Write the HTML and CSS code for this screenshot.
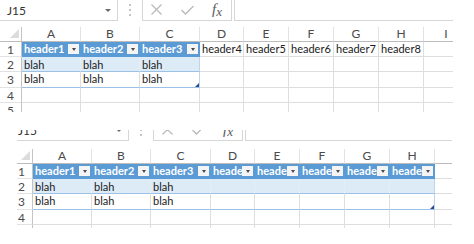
FILE: index.html
```html
<!DOCTYPE html>
<html>
<head>
<meta charset="utf-8">
<link rel="stylesheet" href="styles.css">
</head>
<body>
<div class="page">
  <div class="shot shot-a">
    <div class="sheet">
      <div class="fbar">
        <div class="namebox"><span class="nb-text">J15</span><span class="nb-arrow"></span></div>
        <div class="grip"><svg width="2" height="14" viewBox="0 0 2 14"><rect x="0" y="1" width="2" height="2" fill="#c4c4c4"/><rect x="0" y="6" width="2" height="2" fill="#c4c4c4"/><rect x="0" y="11" width="2" height="2" fill="#c4c4c4"/></svg></div>
        <div class="fbtns">
          <span class="slot s1"><svg width="11" height="11" viewBox="0 0 11 11"><path d="M0.5 0.5 L10.5 10.5 M10.5 0.5 L0.5 10.5" stroke="#b9b9b9" stroke-width="1.2" fill="none"/></svg></span>
          <span class="slot s2"><svg width="13" height="10" viewBox="0 0 13 10"><path d="M0.5 5 L4.5 9 L12.5 1" stroke="#b9b9b9" stroke-width="1.3" fill="none"/></svg></span>
          <span class="slot s3"><span class="fx">f<span class="fx-x">x</span></span></span>
        </div>
        <div class="formula"></div>
      </div>
      <div class="grid">
        <div class="corner"><span class="tri"></span></div>
        <div class="colh">A</div><div class="colh">B</div><div class="colh">C</div><div class="colh">D</div><div class="colh">E</div><div class="colh">F</div><div class="colh">G</div><div class="colh">H</div><div class="colh">I</div>

        <div class="rowh">1</div>
        <div class="th"><span class="tt">header1</span><span class="dd"><span class="dd-tri"></span></span></div>
        <div class="th"><span class="tt">header2</span><span class="dd"><span class="dd-tri"></span></span></div>
        <div class="th"><span class="tt">header3</span><span class="dd"><span class="dd-tri"></span></span></div>
        <div class="c">header4</div><div class="c">header5</div><div class="c">header6</div><div class="c">header7</div><div class="c">header8</div><div class="c"></div>

        <div class="rowh">2</div>
        <div class="band">blah</div><div class="band">blah</div><div class="band last">blah</div>
        <div class="c"></div><div class="c"></div><div class="c"></div><div class="c"></div><div class="c"></div><div class="c"></div>

        <div class="rowh">3</div>
        <div class="tr">blah</div><div class="tr">blah</div><div class="tr last">blah<span class="handle"></span></div>
        <div class="c"></div><div class="c"></div><div class="c"></div><div class="c"></div><div class="c"></div><div class="c"></div>

        <div class="rowh">4</div>
        <div class="c"></div><div class="c"></div><div class="c"></div><div class="c"></div><div class="c"></div><div class="c"></div><div class="c"></div><div class="c"></div><div class="c"></div>

        <div class="rowh">5</div>
        <div class="c"></div><div class="c"></div><div class="c"></div><div class="c"></div><div class="c"></div><div class="c"></div><div class="c"></div><div class="c"></div><div class="c"></div>
      </div>
    </div>
  </div>

  <div class="shot shot-b">
    <div class="sheet">
      <div class="fbar">
        <div class="namebox"><span class="nb-text">J15</span><span class="nb-arrow"></span></div>
        <div class="grip"><svg width="2" height="14" viewBox="0 0 2 14"><rect x="0" y="1" width="2" height="2" fill="#c4c4c4"/><rect x="0" y="6" width="2" height="2" fill="#c4c4c4"/><rect x="0" y="11" width="2" height="2" fill="#c4c4c4"/></svg></div>
        <div class="fbtns">
          <span class="slot s1"><svg width="11" height="11" viewBox="0 0 11 11"><path d="M0.5 0.5 L10.5 10.5 M10.5 0.5 L0.5 10.5" stroke="#b9b9b9" stroke-width="1.2" fill="none"/></svg></span>
          <span class="slot s2"><svg width="13" height="10" viewBox="0 0 13 10"><path d="M0.5 5 L4.5 9 L12.5 1" stroke="#b9b9b9" stroke-width="1.3" fill="none"/></svg></span>
          <span class="slot s3"><span class="fx">f<span class="fx-x">x</span></span></span>
        </div>
        <div class="formula"></div>
      </div>
      <div class="grid">
        <div class="corner"><span class="tri"></span></div>
        <div class="colh">A</div><div class="colh">B</div><div class="colh">C</div><div class="colh">D</div><div class="colh">E</div><div class="colh">F</div><div class="colh">G</div><div class="colh">H</div><div class="colh">I</div>

        <div class="rowh">1</div>
        <div class="th"><span class="tt">header1</span><span class="dd"><span class="dd-tri"></span></span></div>
        <div class="th"><span class="tt">header2</span><span class="dd"><span class="dd-tri"></span></span></div>
        <div class="th"><span class="tt">header3</span><span class="dd"><span class="dd-tri"></span></span></div>
        <div class="th"><span class="tt">header4</span><span class="dd"><span class="dd-tri"></span></span></div>
        <div class="th"><span class="tt">header5</span><span class="dd"><span class="dd-tri"></span></span></div>
        <div class="th"><span class="tt">header6</span><span class="dd"><span class="dd-tri"></span></span></div>
        <div class="th"><span class="tt">header7</span><span class="dd"><span class="dd-tri"></span></span></div>
        <div class="th"><span class="tt">header8</span><span class="dd"><span class="dd-tri"></span></span></div>
        <div class="c"></div>

        <div class="rowh">2</div>
        <div class="band">blah</div><div class="band">blah</div><div class="band">blah</div>
        <div class="band"></div><div class="band"></div><div class="band"></div><div class="band"></div><div class="band last"></div>
        <div class="c"></div>

        <div class="rowh">3</div>
        <div class="tr">blah</div><div class="tr">blah</div><div class="tr">blah</div>
        <div class="tr"></div><div class="tr"></div><div class="tr"></div><div class="tr"></div><div class="tr last"><span class="handle"></span></div>
        <div class="c"></div>

        <div class="rowh">4</div>
        <div class="c"></div><div class="c"></div><div class="c"></div><div class="c"></div><div class="c"></div><div class="c"></div><div class="c"></div><div class="c"></div><div class="c"></div>

        <div class="rowh">5</div>
        <div class="c"></div><div class="c"></div><div class="c"></div><div class="c"></div><div class="c"></div><div class="c"></div><div class="c"></div><div class="c"></div><div class="c"></div>
      </div>
    </div>
  </div>
</div>
</body>
</html>
```

FILE: styles.css
```css
html, body {
  margin: 0;
  padding: 0;
  background: #ffffff;
}

.page {
  width: 474px;
  height: 244px;
  overflow: hidden;
  font-family: Lato, "Open Sans", "Liberation Sans", sans-serif;
}

.shot {
  overflow: hidden;
  background: #ffffff;
}

.shot-a {
  width: 453px;
  height: 112px;
}

.shot-b {
  width: 435px;
  height: 98px;
  margin-left: 17px;
  margin-top: 18px;
}

.sheet {
  width: 480px;
}

.shot-b .sheet {
  margin-left: -6px;
  margin-top: -11px;
}

/* formula bar */
.fbar {
  display: flex;
  height: 22px;
  margin-top: -1px;
  margin-bottom: 6px;
}

.shot-b .fbar {
  margin-bottom: 8px;
}

.namebox {
  box-sizing: border-box;
  width: 118px;
  border: 1px solid #d6d6d6;
  border-left: none;
  display: flex;
  align-items: center;
  justify-content: space-between;
  padding-left: 7px;
  padding-right: 6px;
}

.nb-text {
  font-size: 12px;
  color: #333333;
}

.nb-arrow {
  width: 0;
  height: 0;
  border-left: 3px solid transparent;
  border-right: 3px solid transparent;
  border-top: 3px solid #6a6a6a;
}

.grip {
  width: 24px;
  display: flex;
  align-items: center;
  justify-content: center;
}

.fbtns {
  box-sizing: border-box;
  width: 90px;
  border: 1px solid #d6d6d6;
  border-top: none;
  display: flex;
  align-items: center;
}

.slot {
  display: flex;
  align-items: center;
  justify-content: center;
  height: 100%;
}

.s1 { width: 26px; }
.s2 { width: 36px; }
.s3 { width: 24px; }

.fx {
  font-family: "Liberation Serif", "DejaVu Serif", serif;
  font-style: italic;
  font-size: 15px;
  color: #5a5a5a;
  line-height: 1;
}

.fx-x {
  font-size: 13px;
  position: relative;
  top: 2px;
}

.formula {
  flex: 1;
  margin-left: 2px;
  border: 1px solid #d6d6d6;
  border-top: none;
}

/* grid */
.grid {
  display: grid;
  grid-template-columns: 22px 59px 59px 60px 44px 45px 45px 45px 45px 45px;
  grid-template-rows: 15px 15px 15px 16px 15px 15px 15px;
}

.grid > div {
  box-sizing: border-box;
  border-right: 1px solid #dedede;
  border-bottom: 1px solid #dedede;
  font-size: 11px;
  line-height: 14px;
  color: #1a1a1a;
  white-space: nowrap;
  overflow: hidden;
  position: relative;
}

.grid > .corner {
  border-right: 1px solid #c4c4c4;
  border-bottom: 1px solid #bcbcbc;
  display: flex;
  align-items: flex-end;
  justify-content: flex-end;
  padding: 0 2px 3px 0;
}

.tri {
  width: 0;
  height: 0;
  border-left: 9px solid transparent;
  border-bottom: 9px solid #dcdcdc;
}

.grid > .colh {
  border-bottom: 1px solid #bcbcbc;
  border-right: 1px solid #e2e2e2;
  text-align: center;
  font-size: 12px;
  color: #4a4a4a;
  line-height: 13px;
}

.grid > .rowh {
  border-right: 1px solid #c4c4c4;
  border-bottom: 1px solid #e2e2e2;
  text-align: center;
  font-size: 12px;
  color: #4a4a4a;
  line-height: 15px;
}

.grid > .c {
  padding-left: 2px;
}

.grid > .th {
  background: #5b9bd5;
  border-right: 1px solid #5b9bd5;
  border-bottom: 1px solid #5b9bd5;
  display: flex;
  align-items: center;
  padding-left: 2px;
  padding-right: 1px;
}

.tt {
  flex: 1;
  min-width: 0;
  overflow: hidden;
  color: #ffffff;
  font-weight: bold;
  font-size: 11px;
  line-height: 14px;
}

.dd {
  flex: none;
  width: 11px;
  height: 10px;
  background: #f4f4f4;
  display: flex;
  align-items: center;
  justify-content: center;
}

.dd-tri {
  width: 0;
  height: 0;
  border-left: 2.5px solid transparent;
  border-right: 2.5px solid transparent;
  border-top: 3px solid #4a4a4a;
}

.grid > .band {
  background: #ddebf7;
  border-right: 1px solid #e3eef9;
  border-bottom: 1px solid #9bc2e6;
  padding-left: 2px;
  line-height: 15px;
}

.grid > .band.last {
  border-right: 1px solid #bcd4ec;
}

.grid > .tr {
  border-bottom: 1px solid #9bc2e6;
  padding-left: 2px;
}

.grid > .tr.last {
  border-right: 1px solid #bcd4ec;
}

.handle {
  position: absolute;
  right: 0;
  bottom: 0;
  width: 0;
  height: 0;
  border-left: 4px solid transparent;
  border-bottom: 4px solid #2a4a8a;
}
```
